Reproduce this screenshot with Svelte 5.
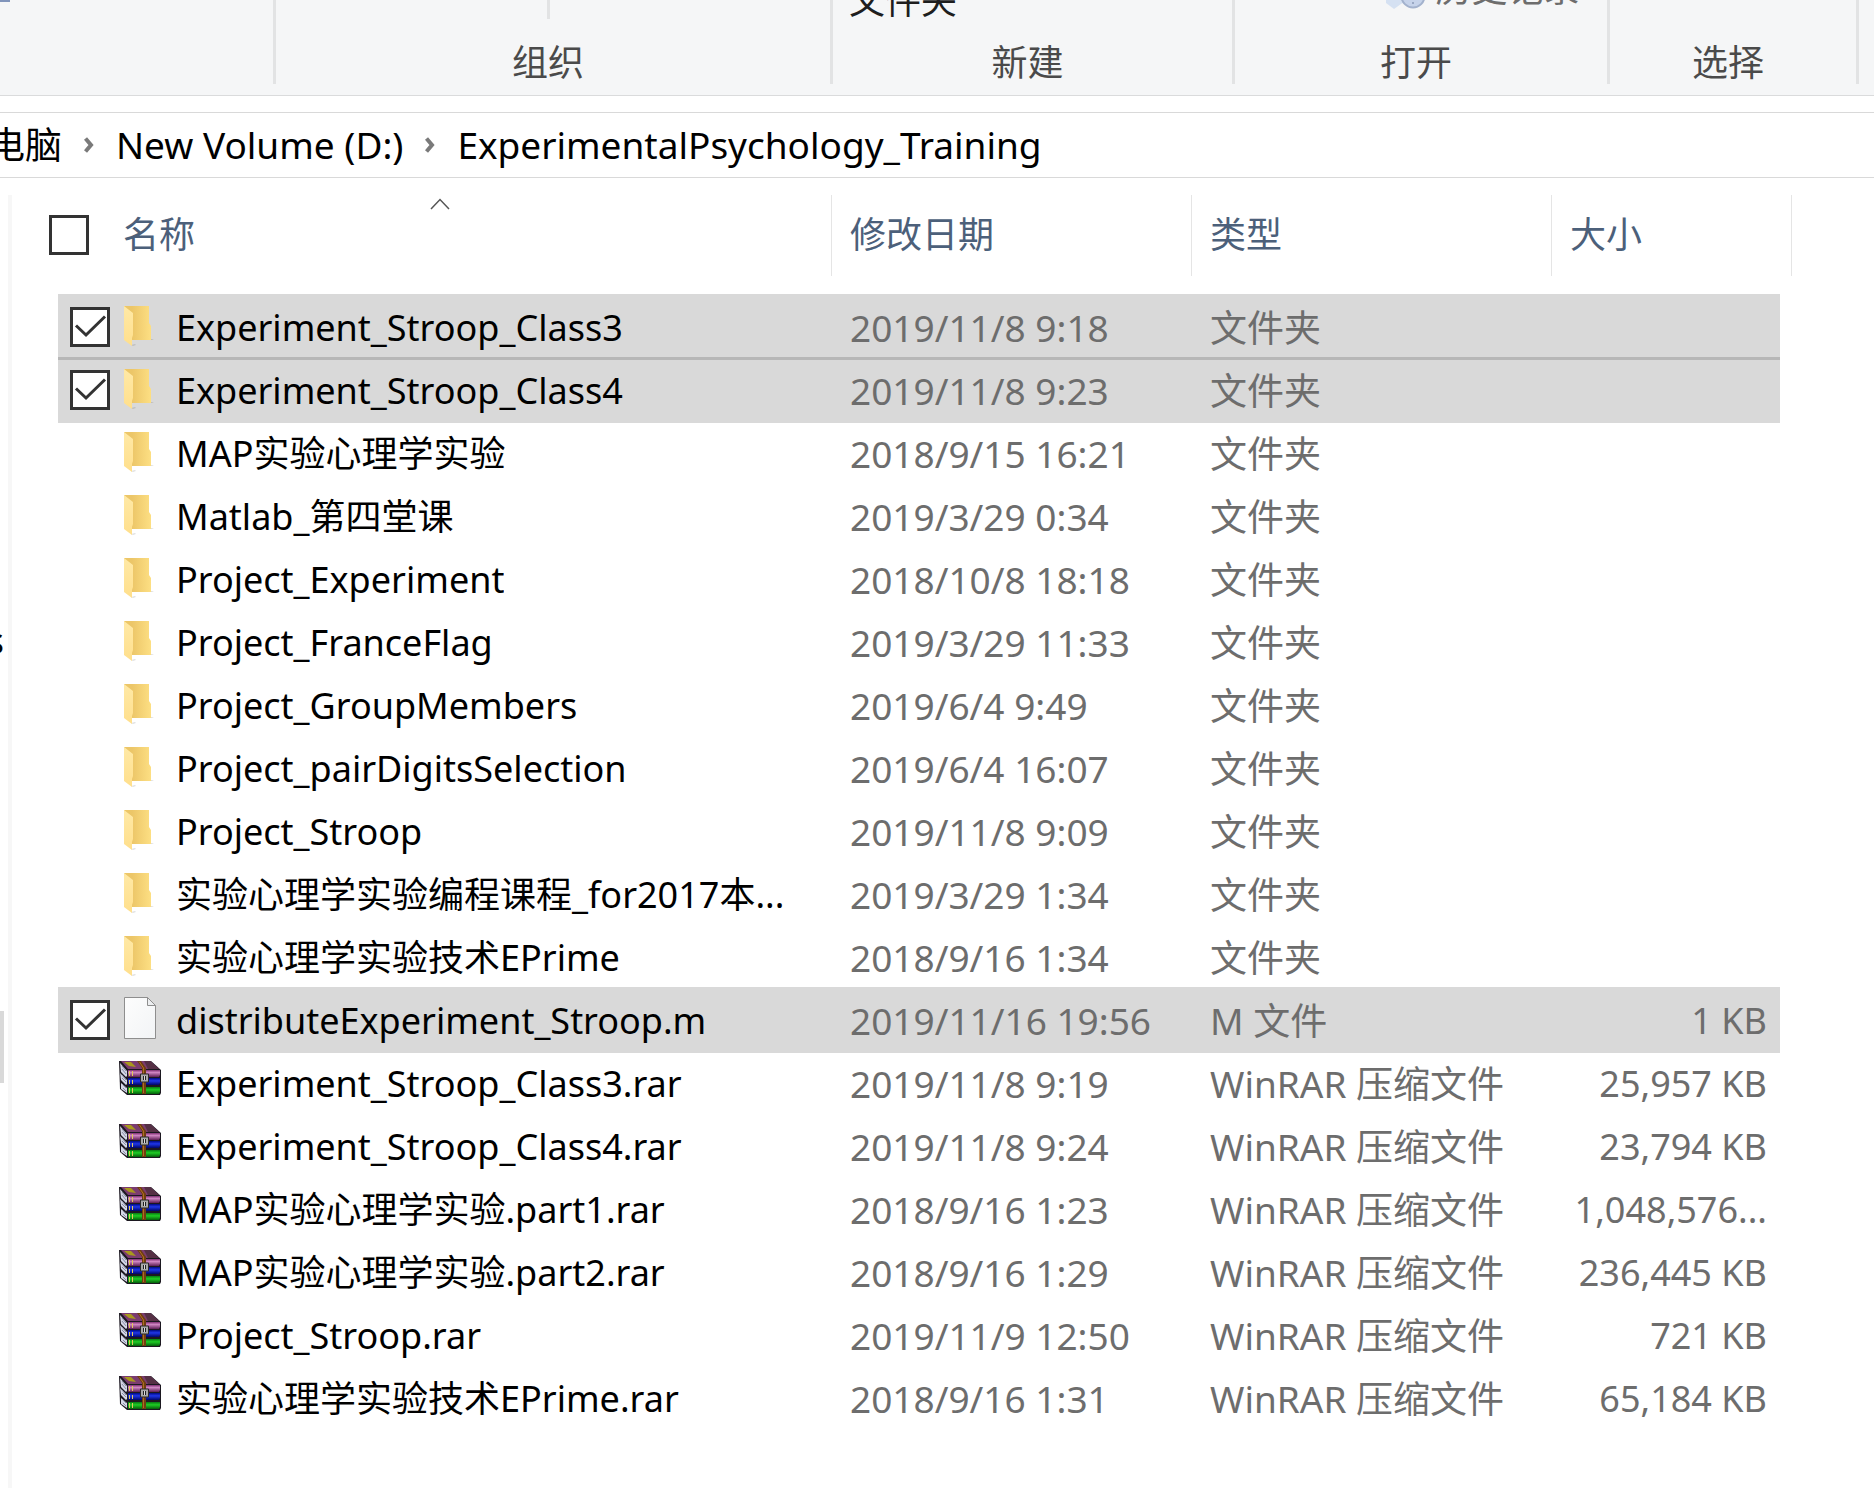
<script lang="ts">
  type Kind = 'folder' | 'file' | 'rar';
  type Item = { name: string; date: string; type: string; size: string; kind: Kind; selected: boolean };

  const folder = (name: string, date: string, selected = false): Item => ({ name, date, type: '文件夹', size: '', kind: 'folder', selected });
  const rar = (name: string, date: string, size: string): Item => ({ name, date, type: 'WinRAR 压缩文件', size, kind: 'rar', selected: false });

  let items: Item[] = $state([
    folder('Experiment_Stroop_Class3', '2019/11/8 9:18', true),
    folder('Experiment_Stroop_Class4', '2019/11/8 9:23', true),
    folder('MAP实验心理学实验', '2018/9/15 16:21'),
    folder('Matlab_第四堂课', '2019/3/29 0:34'),
    folder('Project_Experiment', '2018/10/8 18:18'),
    folder('Project_FranceFlag', '2019/3/29 11:33'),
    folder('Project_GroupMembers', '2019/6/4 9:49'),
    folder('Project_pairDigitsSelection', '2019/6/4 16:07'),
    folder('Project_Stroop', '2019/11/8 9:09'),
    folder('实验心理学实验编程课程_for2017本...', '2019/3/29 1:34'),
    folder('实验心理学实验技术EPrime', '2018/9/16 1:34'),
    { name: 'distributeExperiment_Stroop.m', date: '2019/11/16 19:56', type: 'M 文件', size: '1 KB', kind: 'file', selected: true },
    rar('Experiment_Stroop_Class3.rar', '2019/11/8 9:19', '25,957 KB'),
    rar('Experiment_Stroop_Class4.rar', '2019/11/8 9:24', '23,794 KB'),
    rar('MAP实验心理学实验.part1.rar', '2018/9/16 1:23', '1,048,576...'),
    rar('MAP实验心理学实验.part2.rar', '2018/9/16 1:29', '236,445 KB'),
    rar('Project_Stroop.rar', '2019/11/9 12:50', '721 KB'),
    rar('实验心理学实验技术EPrime.rar', '2018/9/16 1:31', '65,184 KB'),
  ]);

  let all = $state(false);
  function toggleAll() {
    for (const it of items) it.selected = all;
  }
</script>

{#snippet icon(kind: Kind)}
  <svg class="icon" viewBox="0 0 48 48" aria-hidden="true">
    {#if kind === 'folder'}
      <path d="M15 43l4-1 1 1-3 1zM34 37h4l-2 1h-3z" fill="#000" opacity=".12" />
      <path d="M8 4h25v17l2 3v14H15z" fill="url(#fback)" />
      <path d="M8 4l9 7v22l-1 3v8l-8-6z" fill="url(#ffront)" />
    {:else if kind === 'file'}
      <path d="M8.500 2.500h23l8 8v33h-31z" fill="url(#paper)" stroke="#8e8e8e" />
      <path d="M31.500 2.500v8h8z" fill="#eceef0" stroke="#8e8e8e" />
    {:else}
      <path d="M3 3h32l10 9v23l-1 2H11L4 31z" fill="#1c1820" />
      <path d="M4 5l7 8v5l-1 1-5-5zM4 15l7 7v4l-1 1-5-5zM5 25l6 5v5l-6-4z" fill="#d4d7e6" />
      <path d="M6 8l4 5M6 11l4 5M6 17l4 5M6 20l4 4M7 27l3 3M7 30l3 3" stroke="#8b8fa6" />
      <path d="M5 3h29l9 8H12z" fill="#7b3c70" />
      <path d="M28 3h6l9 8H32z" fill="#553044" />
      <path d="M8 4l7 0 5 5-7-1z" fill="#a99a1c" />
      <path d="M12 12h32v5l-1 2H12z" fill="url(#bookA)" />
      <path d="M12 20h32v5l-1 2H12z" fill="url(#bookB)" />
      <path d="M12 29h32v5l-1 2H12z" fill="url(#bookC)" />
      <path d="M13.500 13v5M16.500 13v5M13.500 22v4M16.500 22v4M13.500 30v5M16.500 30v5" stroke="#e3c95a" />
      <path d="M21 3h4l5 7v26h-4V10z" fill="#6f3f10" />
      <path d="M23.500 4l4 6v25" fill="none" stroke="#b06e22" />
      <path d="M26 17h5v6h-5z" fill="#222" stroke="#a8a8a8" stroke-width="2" />
      <path d="M24.500 16h8v8h-8z" fill="none" stroke="#2a2a2a" />
      <path d="M28.500 18v4" stroke="#ddd" />
    {/if}
  </svg>
{/snippet}

{#snippet tick()}
  <svg class="tick" viewBox="0 0 40 40" aria-hidden="true"><path d="M6 18.500L16 28 35 9.500" /></svg>
{/snippet}

<svg class="defs" width="0" height="0" aria-hidden="true">
  <defs>
    <linearGradient id="fback" x1="0" x2="1"><stop offset=".3" stop-color="#ecc668" /><stop offset="1" stop-color="#fddf83" /></linearGradient>
    <linearGradient id="ffront" x1="0" x2="0" y1="0" y2="1"><stop offset="0" stop-color="#ffe9a6" /><stop offset="1" stop-color="#ffdf8c" /></linearGradient>
    <linearGradient id="paper" x1="0" x2="1" y1="0" y2="1"><stop offset="0" stop-color="#fdfdfd" /><stop offset="1" stop-color="#f2f4f6" /></linearGradient>
    <linearGradient id="bookA" x1="0" x2="0" y1="0" y2="1"><stop offset="0" stop-color="#7d2d70" /><stop offset=".35" stop-color="#cf86c2" /><stop offset="1" stop-color="#5e1e54" /></linearGradient>
    <linearGradient id="bookB" x1="0" x2="0" y1="0" y2="1"><stop offset="0" stop-color="#000a80" /><stop offset=".4" stop-color="#1f36e8" /><stop offset="1" stop-color="#000668" /></linearGradient>
    <linearGradient id="bookC" x1="0" x2="0" y1="0" y2="1"><stop offset="0" stop-color="#067a12" /><stop offset=".4" stop-color="#1fcc24" /><stop offset="1" stop-color="#045e0a" /></linearGradient>
  </defs>
</svg>

<div class="window">
  <header class="ribbon">
    <section class="group"><span class="sliver"></span></section>
    <section class="group"><span class="split"></span><span class="label">组织</span></section>
    <section class="group"><button class="cmd">文件夹</button><span class="label">新建</span></section>
    <section class="group">
      <button class="cmd history" disabled>
        <svg viewBox="0 0 40 40" aria-hidden="true">
          <path d="M0 22h22v8L8 40 0 34z" fill="#d5e1f2" />
          <path d="M12 28h10v8z" fill="#8ea3c8" />
          <circle cx="27" cy="27" r="11.500" fill="#c6d3ea" stroke="#a3b2cd" stroke-width="2" />
          <path d="M27 20v8M27 33v2M20 30l2-1M34 30l-2-1" stroke="#8a9ab8" stroke-width="1.500" />
        </svg>
        历史记录
      </button>
      <span class="label">打开</span>
    </section>
    <section class="group"><span></span><span class="label">选择</span></section>
  </header>

  <nav class="address" aria-label="地址">
    <a class="crumb first" href="#pc">电脑</a>
    <svg class="chev" viewBox="0 0 10 16" aria-hidden="true"><path d="M1.500 1.500L7 8 1.500 14.500" /></svg>
    <a class="crumb" href="#d">New Volume (D:)</a>
    <svg class="chev" viewBox="0 0 10 16" aria-hidden="true"><path d="M1.500 1.500L7 8 1.500 14.500" /></svg>
    <a class="crumb" href="#training">ExperimentalPsychology_Training</a>
  </nav>

  <div class="body">
    <aside class="tree"><span class="entry">s</span><span class="thumb"></span></aside>
    <table>
      <thead>
        <tr>
          <th class="name">
            <label class="box"><input type="checkbox" aria-label="全选" bind:checked={all} onchange={toggleAll} />{@render tick()}</label>
            <span>名称</span>
            <svg class="sort" viewBox="0 0 20 12" aria-hidden="true"><path d="M1 11L10 1.500 19 11" /></svg>
          </th>
          <th>修改日期</th>
          <th>类型</th>
          <th>大小</th>
        </tr>
      </thead>
      <tbody>
        {#each items as item}
          <tr class:selected={item.selected}>
            <td class="name">
              <label class="box"><input type="checkbox" aria-label={item.name} bind:checked={item.selected} />{@render tick()}</label>
              {@render icon(item.kind)}
              <span class="text">{item.name}</span>
            </td>
            <td class="info">{item.date}</td>
            <td class="info">{item.type}</td>
            <td class="size">{item.size}</td>
          </tr>
        {/each}
      </tbody>
    </table>
  </div>
</div>

<style>
  :global(body) {
    background: #fff;
  }
  .window {
    min-height: 100vh;
    display: flex;
    flex-direction: column;
    overflow: hidden;
    font: 36px/48px 'Noto Sans', 'Noto Sans CJK SC', sans-serif;
    color: #000;
  }
  .defs {
    position: absolute;
  }

  .ribbon {
    display: grid;
    grid-template-columns: 276fr 557fr 402fr 375fr 249fr 15fr;
    height: 95px;
    background: #f5f6f7;
    border-bottom: 1px solid #dadbdc;
    overflow: hidden;
  }
  .group {
    display: flex;
    flex-direction: column;
    justify-content: space-between;
    align-items: center;
    box-sizing: border-box;
    height: 84px;
    padding-right: 10px;
    border-right: 3px solid #e2e3e4;
  }
  .label {
    color: #4a4a4a;
    line-height: 42px;
  }
  .sliver {
    align-self: flex-start;
    width: 10px;
    height: 2px;
    background: #8195bb;
  }
  .split {
    width: 3px;
    height: 19px;
    background: #e2e3e4;
  }
  .cmd {
    align-self: flex-start;
    display: flex;
    align-items: center;
    gap: 9px;
    height: 40px;
    margin: -19px 0 0 16px;
    padding: 0;
    border: 0;
    background: none;
    font: inherit;
    color: #1e1e1e;
  }
  .history {
    align-self: center;
    margin: -31px 0 0 134px;
    color: #6d6d6d;
    white-space: nowrap;
  }
  .history svg {
    width: 40px;
    height: 40px;
  }

  .address {
    display: flex;
    align-items: center;
    height: 64px;
    margin-top: 16px;
    border: solid #d9d9d9;
    border-width: 1px 0;
    font-size: 37px;
    white-space: nowrap;
  }
  .crumb {
    color: inherit;
    text-decoration: none;
  }
  .crumb.first {
    margin-left: -12px;
  }
  .chev {
    width: 10px;
    height: 16px;
    margin: 0 22px;
  }
  .chev path {
    fill: none;
    stroke: #7a7a7a;
    stroke-width: 4;
  }

  .body {
    flex: 1;
    display: flex;
    gap: 34px;
    padding: 17px 82px 0 0;
  }
  .tree {
    display: flex;
    flex-direction: column;
    flex: none;
    width: 8px;
    border-right: 4px solid #f7f7f7;
    overflow: hidden;
  }
  .entry {
    display: flex;
    justify-content: flex-end;
    width: 4px;
    margin-top: 422px;
    overflow: hidden;
  }
  .thumb {
    width: 4px;
    height: 72px;
    margin-top: 346px;
    background: #d9d9d9;
  }

  table {
    flex: 1;
    min-width: 0;
    display: block;
  }
  thead,
  tbody {
    display: block;
  }
  tr {
    display: grid;
    grid-template-columns: minmax(0, 1fr) 360px 360px 240px;
  }
  th {
    display: flex;
    align-items: center;
    box-sizing: border-box;
    height: 81px;
    padding: 0 0 2px 18px;
    border-right: 1px solid #e5e5e5;
    font-weight: 400;
    color: #4c607a;
    white-space: nowrap;
  }
  th.name {
    position: relative;
    gap: 34px;
    padding-left: 3px;
  }
  .sort {
    position: absolute;
    top: 3px;
    left: 50%;
    width: 20px;
    height: 12px;
    margin-left: -9px;
  }
  .sort path {
    fill: none;
    stroke: #555;
    stroke-width: 1.5;
  }

  tbody {
    margin: 18px 12px 0;
  }
  tbody tr {
    grid-template-columns: minmax(0, 1fr) 360px 360px 228px;
    height: 66px;
    margin-bottom: -3px;
  }
  td {
    padding: 0;
    line-height: 68px;
    color: #6d6d6d;
    white-space: nowrap;
  }
  td.name {
    display: flex;
    align-items: center;
    height: 66px;
    padding-left: 12px;
    color: #000;
  }
  td.info {
    padding-left: 18px;
    font-size: 37px;
  }
  td.size {
    padding-right: 13px;
    text-align: right;
  }
  tr.selected {
    background: #d9d9d9;
  }
  tr.selected + tr.selected {
    box-shadow: inset 0 3px #b7b7b7;
  }
  .icon {
    flex: none;
    width: 48px;
    height: 48px;
    margin: 0 12px 2px 6px;
  }
  .text {
    padding-top: 2px;
    overflow: hidden;
    text-overflow: ellipsis;
  }

  .box {
    display: grid;
    flex: none;
    width: 40px;
    height: 40px;
  }
  .box input,
  .tick {
    grid-area: 1 / 1;
    box-sizing: border-box;
    width: 40px;
    height: 40px;
    margin: 0;
  }
  .box input {
    appearance: none;
    background: #fff;
    border: 3px solid #333;
  }
  tbody .box input:not(:checked):not(:focus-visible) {
    opacity: 0;
  }
  tbody tr:hover .box input:not(:checked) {
    opacity: 1;
  }
  .tick {
    pointer-events: none;
    visibility: hidden;
  }
  .tick path {
    fill: none;
    stroke: #333;
    stroke-width: 3;
  }
  .box input:checked + .tick {
    visibility: visible;
  }
</style>
